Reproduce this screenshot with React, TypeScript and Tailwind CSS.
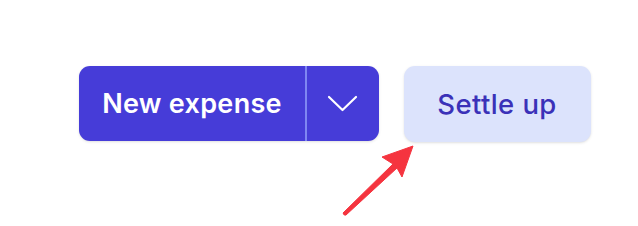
export default function App() {
  return (
    <div className="relative w-[638px] h-[226px] bg-white font-['Inter',sans-serif]">
      <div className="flex items-start gap-[25px] pl-[79px] pt-[66px]">
        <div className="flex h-[75px] rounded-[11px] bg-[#463cd8] text-white shadow-sm">
          <button className="flex w-[226px] items-center justify-center pt-[2px] text-[27px] font-semibold tracking-[0.3px]">
            New expense
          </button>
          <div className="w-[1.5px] bg-[#7f86f2]" />
          <button className="flex w-[72px] items-center justify-center">
            <svg width="31" height="17" viewBox="0 0 31 17" fill="none">
              <path d="M2 2 L15.5 15 L29 2" stroke="white" strokeWidth="2.2" strokeLinecap="round" strokeLinejoin="round" />
            </svg>
          </button>
        </div>
        <button className="flex h-[76px] w-[187px] items-center justify-center pt-[2px] text-[27.5px] font-medium tracking-[0.4px] text-[#3a31b8] rounded-[11px] bg-[#dce3fc] shadow-sm">
          Settle up
        </button>
      </div>
      <svg className="absolute left-0 top-0" width="638" height="226" viewBox="0 0 638 226">
        <path d="M413 146 L382 157 L393 164 L343 213 Q344 216 346 215 L397 168 L402 177 Z" fill="#f5343f" strokeLinejoin="round" stroke="#f5343f" strokeWidth="1" />
      </svg>
    </div>
  )
}
